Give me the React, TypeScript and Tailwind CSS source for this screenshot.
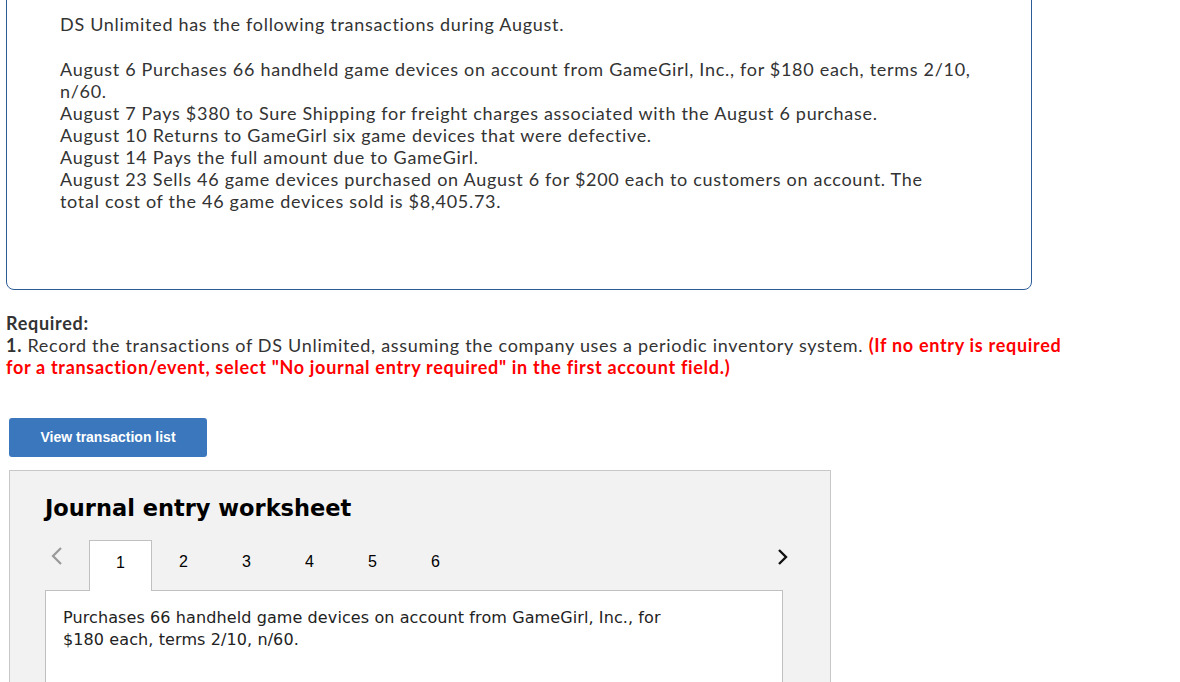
import React from "react";

export default function App() {
  const tabs = [1, 2, 3, 4, 5, 6];
  return (
    <div className="w-[1180px] h-[682px] overflow-hidden bg-white relative" style={{ fontFamily: "Lato, 'Open Sans', sans-serif" }}>
      <div className="mt-[-10px] ml-[6px] w-[1026px] h-[300px] border border-[#2c5c98] rounded-b-[8px] pt-[22px] pl-[53px] text-[18px] leading-[22px] tracking-[0.7px] text-[#333333]">
        <p>DS Unlimited has the following transactions during August.</p>
        <p className="mt-[23px] w-[930px]">August 6 Purchases 66 handheld game devices on account from GameGirl, Inc., for $180 each, terms 2/10, n/60.</p>
        <p>August 7 Pays $380 to Sure Shipping for freight charges associated with the August 6 purchase.</p>
        <p>August 10 Returns to GameGirl six game devices that were defective.</p>
        <p>August 14 Pays the full amount due to GameGirl.</p>
        <p className="w-[900px]">August 23 Sells 46 game devices purchased on August 6 for $200 each to customers on account. The total cost of the 46 game devices sold is $8,405.73.</p>
      </div>
      <div className="mt-[22px] pl-[6px] text-[18px] leading-[22px] tracking-[0.7px] text-[#333333]">
        <p className="font-bold">Required:</p>
        <p className="w-[1075px]">
          <span className="font-bold">1.</span> Record the transactions of DS Unlimited, assuming the company uses a periodic inventory system.{" "}
          <span className="font-bold text-[#ff0000]">(If no entry is required for a transaction/event, select "No journal entry required" in the first account field.)</span>
        </p>
      </div>
      <div className="mt-[40px] ml-[9px]">
        <button className="w-[198px] h-[39px] rounded-[3px] bg-[#3a77bd] text-white text-[14px] font-bold" style={{ fontFamily: "'Liberation Sans', Arial, sans-serif" }}>View transaction list</button>
      </div>
      <div className="mt-[13px] ml-[9px] w-[822px] h-[300px] bg-[#f2f2f2] border border-[#c8c8c8] pt-[22px] pl-[35px]" style={{ fontFamily: "'DejaVu Sans', Verdana, sans-serif" }}>
        <h2 className="text-[22.5px] font-bold leading-[30px] text-black">Journal entry worksheet</h2>
        <div className="mt-[17px] flex items-end h-[50px] w-[738px] relative">
          <div className="w-[44px] h-[50px] flex items-start pt-[4px] pl-[4px]">
            <svg width="16" height="24" viewBox="0 0 16 24"><path d="M12 4 L4 12 L12 20" fill="none" stroke="#999" strokeWidth="2.2" /></svg>
          </div>
          {tabs.map((t) =>
            t === 1 ? (
              <div key={t} className="w-[63px] h-[51px] bg-white border border-[#c0c0c0] border-b-0 relative z-10 mb-[-1px] flex justify-center pt-[10px] text-[16px] text-black" style={{ fontFamily: "'Liberation Sans', Arial, sans-serif" }}>{t}</div>
            ) : (
              <div key={t} className="w-[63px] h-[50px] flex justify-center pt-[10px] text-[16px] text-black" style={{ fontFamily: "'Liberation Sans', Arial, sans-serif" }}>{t}</div>
            )
          )}
          <div className="flex-1" />
          <div className="h-[50px] flex items-start pt-[6px] mr-[-8px]">
            <svg width="16" height="22" viewBox="0 0 16 22"><path d="M4 4 L11 11 L4 18" fill="none" stroke="#111" strokeWidth="2.4" /></svg>
          </div>
        </div>
        <div className="w-[738px] h-[200px] bg-white border border-[#c0c0c0] pt-[16px] pl-[17px] text-[16px] leading-[22px] tracking-[0.1px] text-[#222]">
          <p className="w-[620px]">Purchases 66 handheld game devices on account from GameGirl, Inc., for $180 each, terms 2/10, n/60.</p>
        </div>
      </div>
    </div>
  );
}
